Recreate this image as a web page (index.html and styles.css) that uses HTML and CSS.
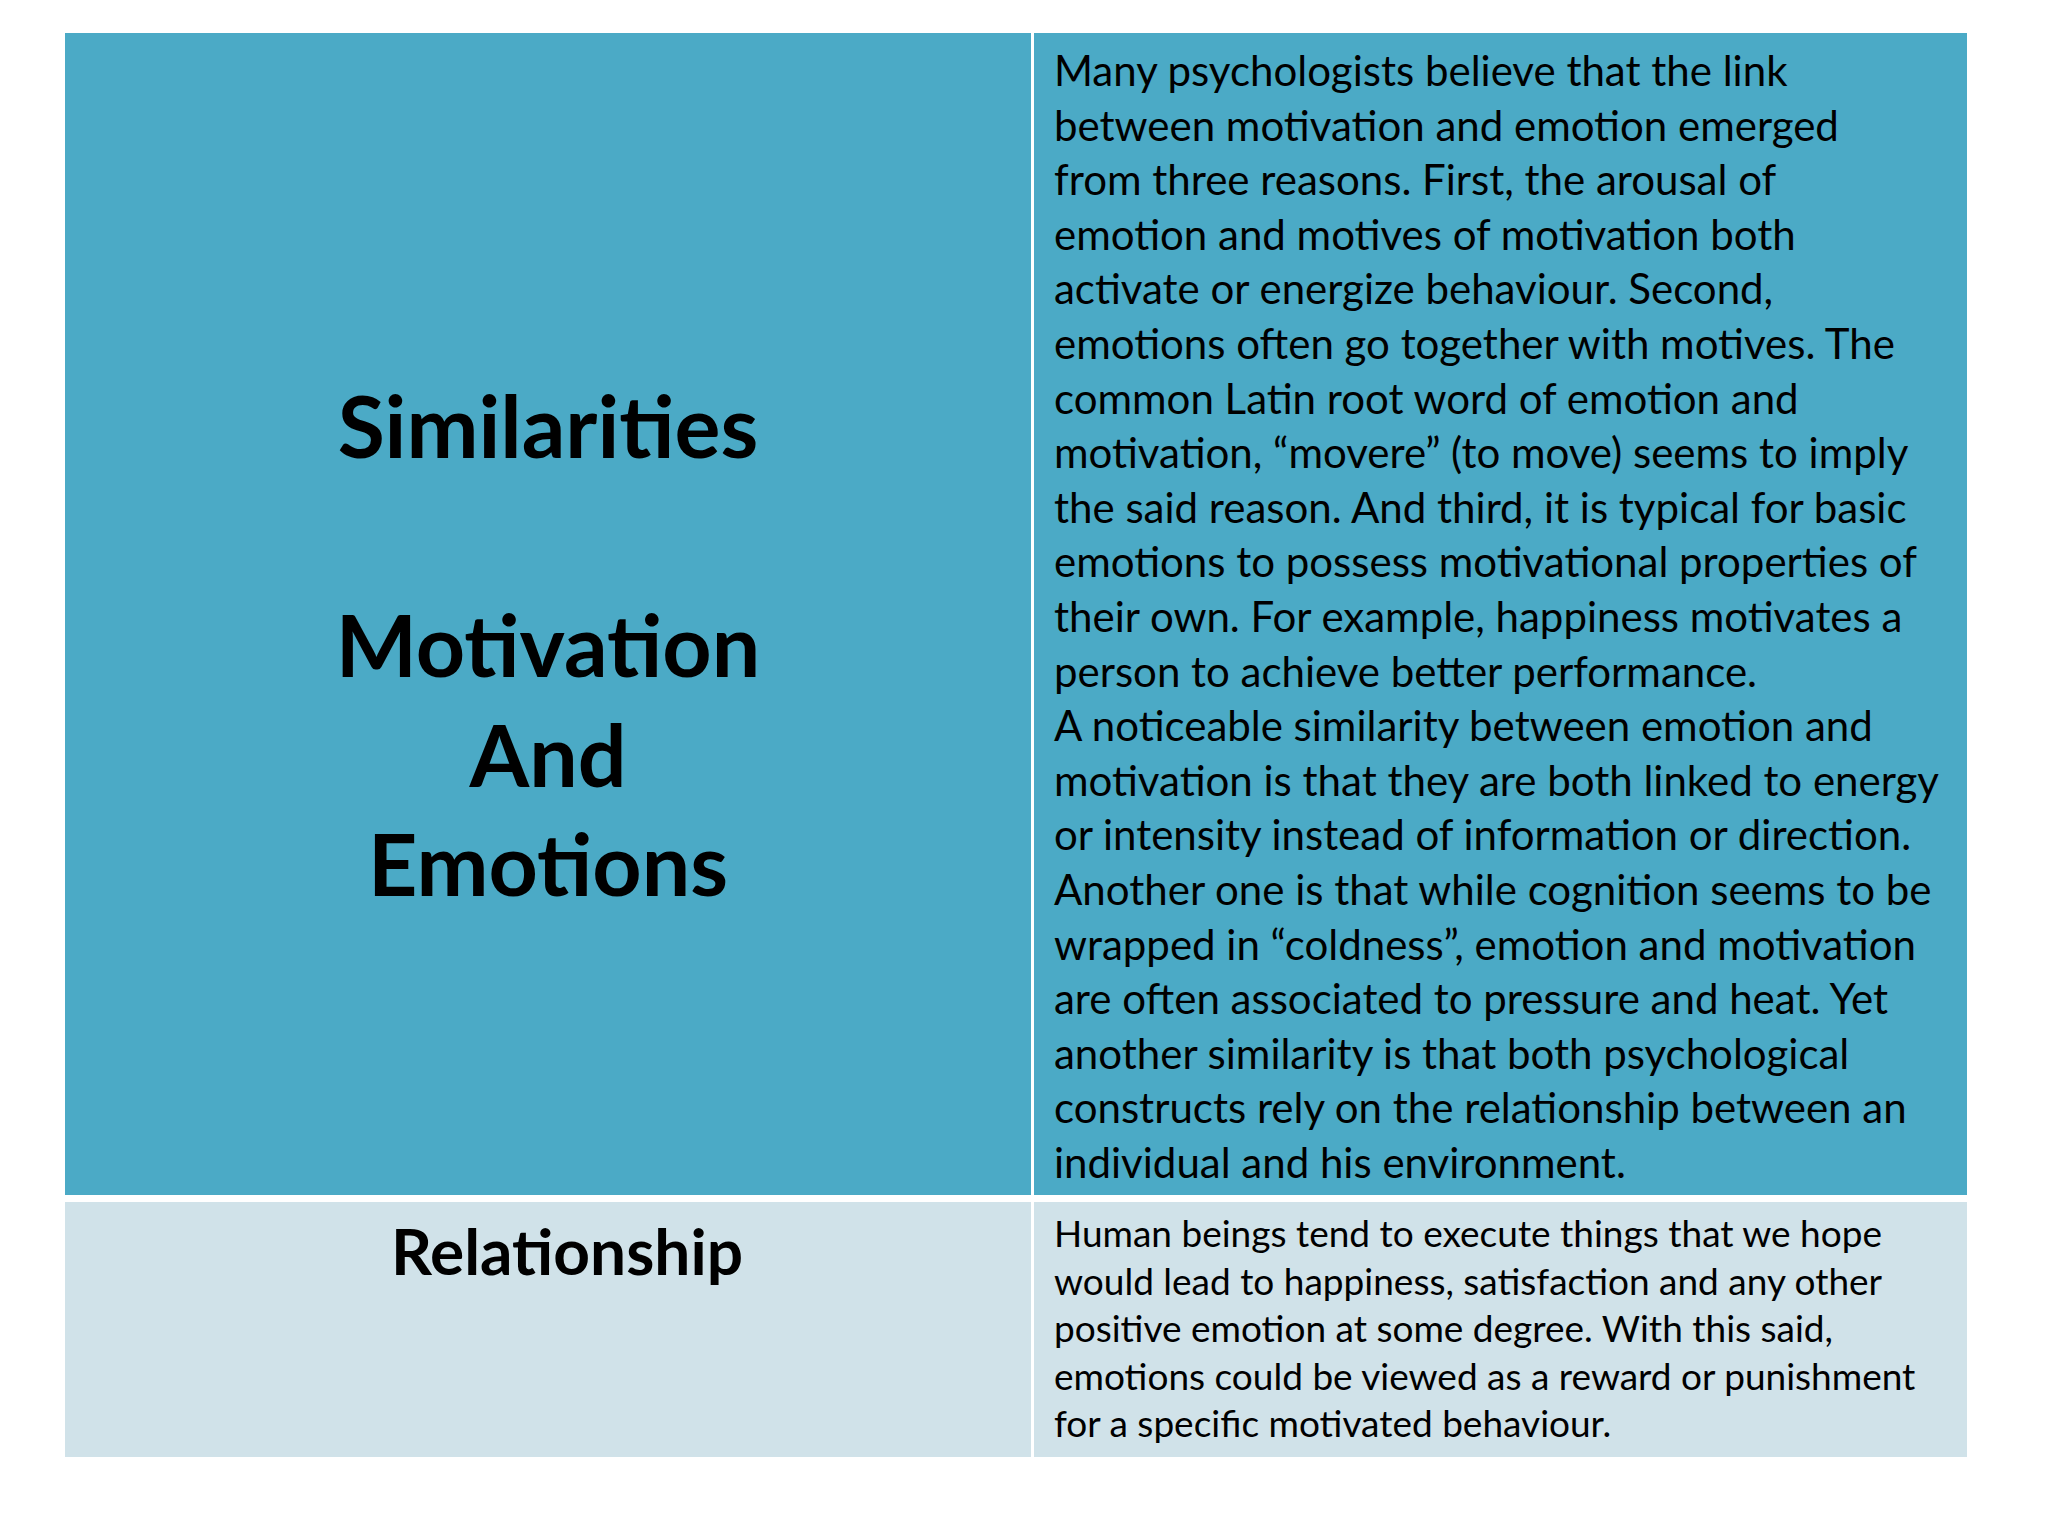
FILE: index.html
```html
<!DOCTYPE html>
<html lang="en">
<head>
<meta charset="utf-8">
<title>Similarities – Motivation And Emotions</title>
<link rel="stylesheet" href="styles.css">
</head>
<body>
<div class="slide">
  <div class="table">
    <div class="cell head dark">
      <div class="title">Similarities<br><br>Motivation<br>And<br>Emotions</div>
    </div>
    <div class="cell body dark">
      <p class="text big">Many psychologists believe that the link<br>between motivation and emotion emerged<br>from three reasons. First, the arousal of<br>emotion and motives of motivation both<br>activate or energize behaviour. Second,<br>emotions often go together with motives. The<br>common Latin root word of emotion and<br>motivation, “movere” (to move) seems to imply<br>the said reason. And third, it is typical for basic<br>emotions to possess motivational properties of<br>their own. For example, happiness motivates a<br>person to achieve better performance.<br>A noticeable similarity between emotion and<br>motivation is that they are both linked to energy<br>or intensity instead of information or direction.<br>Another one is that while cognition seems to be<br>wrapped in “coldness”, emotion and motivation<br>are often associated to pressure and heat. Yet<br>another similarity is that both psychological<br>constructs rely on the relationship between an<br>individual and his environment.</p>
    </div>
    <div class="cell head light">
      <div class="subtitle">Relationship</div>
    </div>
    <div class="cell body light">
      <p class="text small">Human beings tend to execute things that we hope<br>would lead to happiness, satisfaction and any other<br>positive emotion at some degree. With this said,<br>emotions could be viewed as a reward or punishment<br>for a specific motivated behaviour.</p>
    </div>
  </div>
</div>
</body>
</html>
```
FILE: styles.css
```css
html, body {
  margin: 0;
  padding: 0;
  background: #ffffff;
}

body {
  font-family: Lato, "Noto Sans", sans-serif;
  color: #000000;
}

.slide {
  width: 2048px;
  height: 1536px;
  padding: 33px 0 0 65px;
  box-sizing: border-box;
}

.table {
  display: grid;
  width: 1902px;
  grid-template-columns: 966px 933px;
  grid-template-rows: 1162px 255px;
  column-gap: 3px;
  row-gap: 7px;
}

.cell {
  box-sizing: border-box;
}

.dark {
  background: #4baac6;
}

.light {
  background: #d0e2e9;
}

.head.dark {
  display: flex;
  align-items: center;
  justify-content: center;
  padding-top: 60px;
}

.title {
  font-weight: 700;
  font-size: 86px;
  line-height: 109.5px;
  text-align: center;
}

.head.light {
  padding: 10px 0 0 38px;
  text-align: center;
}

.subtitle {
  font-weight: 700;
  font-size: 64px;
  line-height: 77px;
}

.body {
  padding-left: 20px;
}

.text {
  margin: 0;
  white-space: nowrap;
}

.text.big {
  font-size: 42px;
  line-height: 54.6px;
  padding-top: 10px;
}

.text.small {
  font-size: 37px;
  line-height: 47.5px;
  padding-top: 7px;
}
```
